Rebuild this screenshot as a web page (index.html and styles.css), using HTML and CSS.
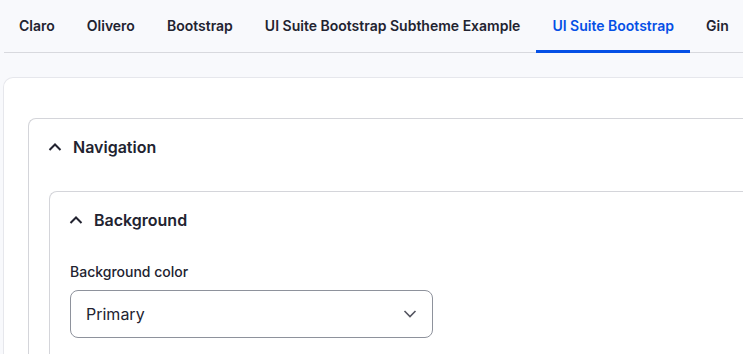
FILE: index.html
```html
<!DOCTYPE html>
<html lang="en">
<head>
<meta charset="utf-8">
<title>UI Suite Bootstrap</title>
<link rel="stylesheet" href="styles.css">
</head>
<body>
<nav class="tabs">
  <a class="tab">Claro</a>
  <a class="tab">Olivero</a>
  <a class="tab">Bootstrap</a>
  <a class="tab">UI Suite Bootstrap Subtheme Example</a>
  <a class="tab is-active">UI Suite Bootstrap</a>
  <a class="tab">Gin</a>
</nav>
<main class="card">
  <section class="details outer">
    <div class="summary">
      <svg class="chev" width="14" height="8" viewBox="0 0 14 8"><polyline points="1.5,7 7,1.5 12.5,7" fill="none" stroke="#222330" stroke-width="2"/></svg>
      <span>Navigation</span>
    </div>
    <div class="details-body">
      <section class="details">
        <div class="summary">
          <svg class="chev" width="14" height="8" viewBox="0 0 14 8"><polyline points="1.5,7 7,1.5 12.5,7" fill="none" stroke="#222330" stroke-width="2"/></svg>
          <span>Background</span>
        </div>
        <div class="details-body inner">
          <label class="label">Background color</label>
          <div class="select">
            <span>Primary</span>
            <svg width="14" height="8" viewBox="0 0 14 8"><polyline points="1.5,1 7,6.5 12.5,1" fill="none" stroke="#545560" stroke-width="1.6"/></svg>
          </div>
        </div>
      </section>
    </div>
  </section>
</main>
</body>
</html>
```

FILE: styles.css
```css
html, body {
  margin: 0;
  padding: 0;
  height: 100%;
  background: #f8f9fc;
  font-family: Inter, "Noto Sans", sans-serif;
  color: #222330;
  overflow: hidden;
}

body {
  display: flex;
  flex-direction: column;
}

.tabs {
  display: flex;
  flex: none;
  margin-left: 4px;
  border-bottom: 1px solid #d8d9de;
  height: 52px;
}

.tab {
  position: relative;
  padding: 16px 16px;
  font-size: 14px;
  line-height: 20px;
  font-weight: 600;
  white-space: nowrap;
  color: #222330;
}

.tab:first-child {
  padding-left: 15px;
}

.tab.is-active {
  color: #0550e6;
}

.tab.is-active::after {
  content: "";
  position: absolute;
  left: 0;
  right: 0;
  bottom: -1px;
  height: 3px;
  background: #0550e6;
}

.card {
  flex: 1;
  min-height: 0;
  overflow: hidden;
  margin: 24px -20px 0 3px;
  background: #fff;
  border: 1px solid #e6e7ec;
  border-bottom: none;
  border-radius: 10px 0 0 0;
  padding: 40px 0 0 24px;
}

.details {
  border: 1px solid #d4d5da;
  border-radius: 8px 0 0 0;
  border-right: none;
  border-bottom: none;
  padding-bottom: 60px;
}

.summary {
  display: flex;
  align-items: center;
  gap: 11px;
  padding: 16px 20px 16px 19px;
  font-size: 16px;
  line-height: 24px;
  font-weight: 600;
}

.chev {
  display: block;
}

.details-body {
  padding: 16px 0 0 20px;
}

.details-body.inner {
  padding: 14px 0 0 20px;
}

.label {
  display: block;
  font-size: 14px;
  line-height: 20px;
  font-weight: 500;
  margin-bottom: 8px;
}

.select {
  box-sizing: border-box;
  width: 363px;
  height: 48px;
  border: 1px solid #8e929c;
  border-radius: 8px;
  display: flex;
  align-items: center;
  justify-content: space-between;
  padding: 0 15px 0 15px;
  font-size: 16px;
  color: #222330;
}
```
